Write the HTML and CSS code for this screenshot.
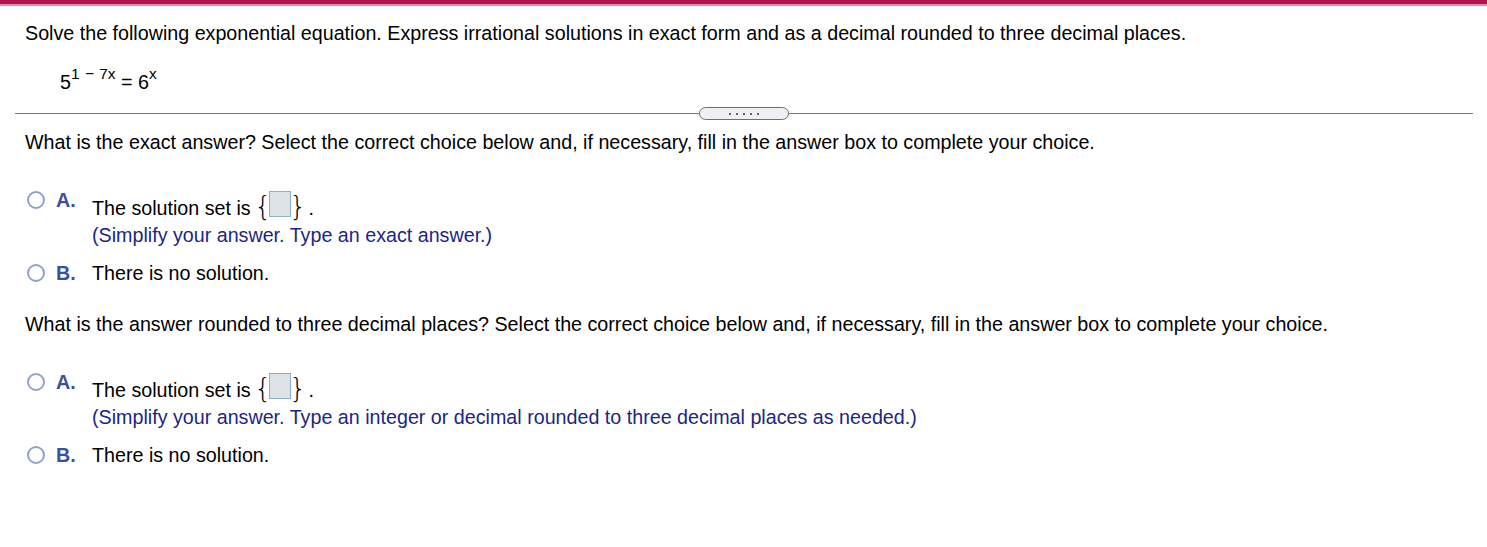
FILE: index.html
```html
<!DOCTYPE html>
<html>
<head>
<meta charset="utf-8">
<link rel="stylesheet" href="styles.css">
</head>
<body>
<div class="topbar"></div>
<div class="page">
  <p class="prompt">Solve the following exponential equation. Express irrational solutions in exact form and as a decimal rounded to three decimal places.</p>
  <div class="equation">5<sup>1 − 7x</sup> = 6<sup>x</sup></div>
  <div class="divider"><span class="pill"><i></i><i></i><i></i><i></i><i></i></span></div>
  <p class="question">What is the exact answer? Select the correct choice below and, if necessary, fill in the answer box to complete your choice.</p>
  <div class="choice">
    <span class="radio"></span><span class="letter">A.</span>
    <div class="body">
      <div class="line boxed">The solution set is <span class="brace">{</span><span class="box"></span><span class="brace">}</span>.</div>
      <div class="hint">(Simplify your answer. Type an exact answer.)</div>
    </div>
  </div>
  <div class="choice">
    <span class="radio"></span><span class="letter">B.</span>
    <div class="body"><div class="line">There is no solution.</div></div>
  </div>
  <p class="question q2">What is the answer rounded to three decimal places? Select the correct choice below and, if necessary, fill in the answer box to complete your choice.</p>
  <div class="choice">
    <span class="radio"></span><span class="letter">A.</span>
    <div class="body">
      <div class="line boxed">The solution set is <span class="brace">{</span><span class="box"></span><span class="brace">}</span>.</div>
      <div class="hint">(Simplify your answer. Type an integer or decimal rounded to three decimal places as needed.)</div>
    </div>
  </div>
  <div class="choice">
    <span class="radio"></span><span class="letter">B.</span>
    <div class="body"><div class="line">There is no solution.</div></div>
  </div>
</div>
</body>
</html>
```
FILE: styles.css
```css
html, body {
  margin: 0;
  padding: 0;
  background: #fff;
  font-family: "Liberation Sans", Arial, sans-serif;
  color: #000;
}
.topbar {
  height: 4px;
  background: #b0134f;
  border-bottom: 2px solid #e58aaa;
}
.page {
  padding: 0 14px 0 15px;
  font-size: 19.7px;
  line-height: 22px;
}
.prompt {
  margin: 16px 0 0 10px;
}
.equation {
  margin: 27px 0 0 45px;
}
.equation sup {
  font-size: 15.5px;
  vertical-align: 10px;
  line-height: 0;
  word-spacing: 1px;
}
.divider {
  margin-top: 20px;
  height: 1px;
  background: #72777c;
  display: flex;
  justify-content: center;
  align-items: center;
}
.pill {
  width: 88px;
  height: 11px;
  border: 1px solid #686e74;
  border-radius: 7px;
  background: #eef0f3;
  display: flex;
  align-items: center;
  justify-content: center;
  gap: 5px;
  flex: none;
}
.pill i {
  width: 2px;
  height: 2px;
  background: #5c6268;
}
.question {
  margin: 17px 0 0 10px;
}
.q2 {
  margin-top: 29px;
}
.choice {
  display: flex;
  align-items: flex-start;
  margin-left: 12px;
}
.question + .choice {
  margin-top: 36px;
}
.choice + .choice {
  margin-top: 16px;
}
.radio {
  width: 14px;
  height: 14px;
  border: 2px solid #91a1c9;
  border-radius: 50%;
  margin-top: 2px;
  flex: none;
}
.letter {
  font-weight: bold;
  color: #3a4fa3;
  margin-left: 11px;
  width: 36px;
  flex: none;
}
.line {
  display: flex;
  align-items: center;
  height: 22px;
  white-space: pre;
}
.line.boxed {
  margin-top: 8px;
}
.brace {
  font-family: "DejaVu Sans", sans-serif;
  font-weight: 200;
  font-size: 27px;
  line-height: 22px;
  position: relative;
  top: -2px;
  margin: 0 -3px 0 -2px;
}
.brace + .box + .brace {
  margin: 0 2px 0 -3px;
}
.box {
  width: 20px;
  height: 24px;
  background: #dde2e7;
  border: 1px solid #8fb0c4;
  margin: -8px 1px 0;
}
.hint {
  color: #1c2584;
  margin-top: 5px;
}
```
